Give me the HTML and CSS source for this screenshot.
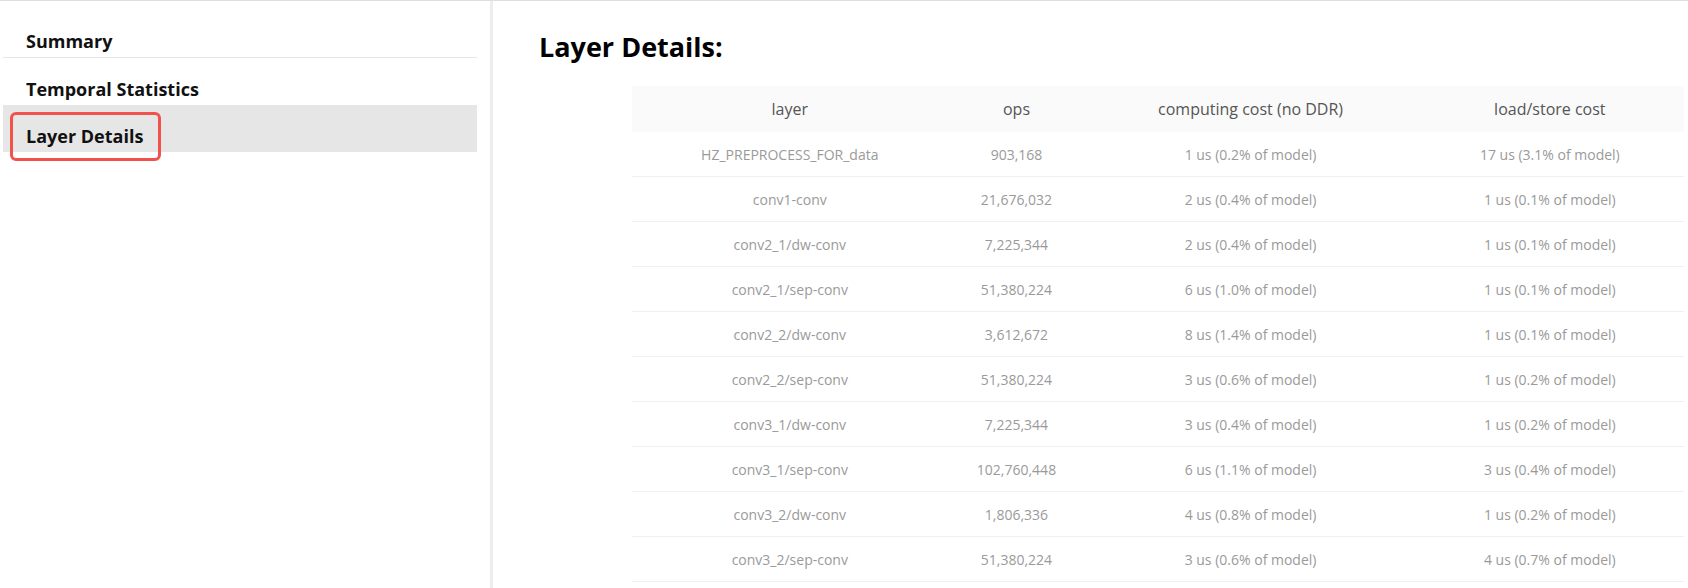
FILE: index.html
```html
<!DOCTYPE html>
<html lang="en">
<head>
<meta charset="utf-8">
<title>Layer Details</title>
<link rel="stylesheet" href="styles.css">
</head>
<body>
<div class="app">
  <aside class="sidebar">
    <div class="nav-item nav-first">Summary</div>
    <div class="nav-item">Temporal Statistics</div>
    <div class="nav-item nav-active">Layer Details<span class="highlight"></span></div>
  </aside>
  <main class="main">
    <h1 class="title">Layer Details:</h1>
    <table class="layer-table">
      <colgroup>
        <col class="col-layer">
        <col class="col-ops">
        <col class="col-compute">
        <col class="col-load">
      </colgroup>
      <thead>
        <tr><th>layer</th><th>ops</th><th>computing cost (no DDR)</th><th>load/store cost</th></tr>
      </thead>
      <tbody>
        <tr><td>HZ_PREPROCESS_FOR_data</td><td>903,168</td><td>1 us (0.2% of model)</td><td>17 us (3.1% of model)</td></tr>
        <tr><td>conv1-conv</td><td>21,676,032</td><td>2 us (0.4% of model)</td><td>1 us (0.1% of model)</td></tr>
        <tr><td>conv2_1/dw-conv</td><td>7,225,344</td><td>2 us (0.4% of model)</td><td>1 us (0.1% of model)</td></tr>
        <tr><td>conv2_1/sep-conv</td><td>51,380,224</td><td>6 us (1.0% of model)</td><td>1 us (0.1% of model)</td></tr>
        <tr><td>conv2_2/dw-conv</td><td>3,612,672</td><td>8 us (1.4% of model)</td><td>1 us (0.1% of model)</td></tr>
        <tr><td>conv2_2/sep-conv</td><td>51,380,224</td><td>3 us (0.6% of model)</td><td>1 us (0.2% of model)</td></tr>
        <tr><td>conv3_1/dw-conv</td><td>7,225,344</td><td>3 us (0.4% of model)</td><td>1 us (0.2% of model)</td></tr>
        <tr><td>conv3_1/sep-conv</td><td>102,760,448</td><td>6 us (1.1% of model)</td><td>3 us (0.4% of model)</td></tr>
        <tr><td>conv3_2/dw-conv</td><td>1,806,336</td><td>4 us (0.8% of model)</td><td>1 us (0.2% of model)</td></tr>
        <tr><td>conv3_2/sep-conv</td><td>51,380,224</td><td>3 us (0.6% of model)</td><td>4 us (0.7% of model)</td></tr>
      </tbody>
    </table>
  </main>
</div>
</body>
</html>
```

FILE: styles.css
```css
html, body {
  margin: 0;
  padding: 0;
  background: #ffffff;
  height: 100%;
  overflow: hidden;
}

body {
  font-family: "Open Sans", "Noto Sans", "Liberation Sans", sans-serif;
  color: #000;
}

.app {
  display: flex;
  border-top: 1px solid #dedede;
  min-height: 100%;
  box-sizing: border-box;
}

.sidebar {
  width: 493px;
  flex: none;
  box-sizing: border-box;
  padding: 9px 13px 0 3px;
  border-right: 3px solid #ededed;
}

.nav-item {
  position: relative;
  font-size: 18px;
  font-weight: 700;
  line-height: 22px;
  padding: 20px 0 5px 23px;
  color: #111;
}

.nav-first {
  border-bottom: 1px solid #e6e6e6;
}

.nav-active {
  background: #e6e6e6;
}

.highlight {
  position: absolute;
  left: 7px;
  top: 7px;
  width: 151px;
  height: 49px;
  box-sizing: border-box;
  border: 3px solid #f2524c;
  border-radius: 6px;
}

.main {
  flex: 1;
  min-width: 0;
  padding: 0 4px 0 46px;
}

.title {
  margin: 24px 0 17px 0;
  font-size: 27px;
  font-weight: 700;
  line-height: 44px;
}

.layer-table {
  margin-left: 93px;
  width: calc(100% - 93px);
  table-layout: fixed;
  border-collapse: collapse;
  font-size: 14px;
}

.col-layer { width: 30%; }
.col-ops { width: 13.1%; }
.col-compute { width: 31.4%; }
.col-load { width: 25.5%; }

.layer-table th {
  background: #fafafa;
  color: #555;
  font-weight: 400;
  font-size: 16px;
  height: 46px;
  padding: 0 8px;
  text-align: center;
  white-space: nowrap;
}

.layer-table td {
  color: #9a9a9a;
  height: 44px;
  padding: 0 8px;
  text-align: center;
  white-space: nowrap;
  border-bottom: 1px solid #f0f0f0;
}
```
